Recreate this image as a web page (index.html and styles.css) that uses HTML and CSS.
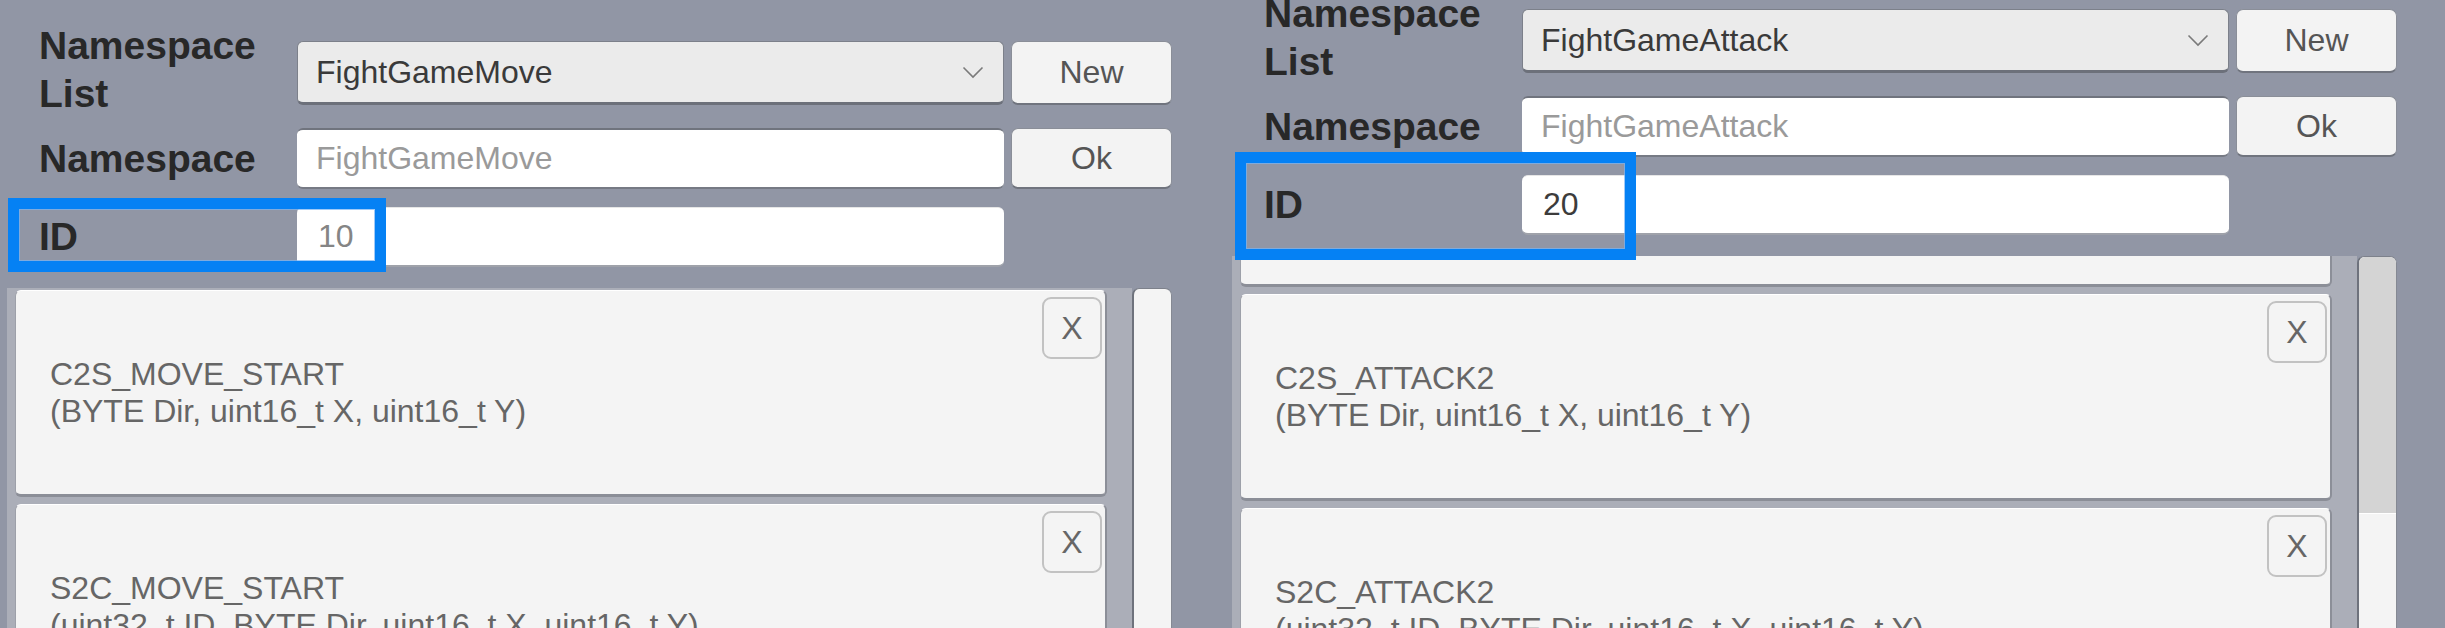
FILE: index.html
```html
<!DOCTYPE html>
<html lang="en">
<head>
<meta charset="utf-8">
<title>Packet Namespace Editor</title>
<link rel="stylesheet" href="styles.css">
</head>
<body>
<div class="page">
  <section class="panel panel-move">
    <div class="row row-list">
      <div class="label">Namespace<br>List</div>
      <div class="dropdown"><span>FightGameMove</span><svg class="chev" width="22" height="13" viewBox="0 0 22 13"><polyline points="1.5,1.5 11,11 20.5,1.5" fill="none" stroke="#7a7a7a" stroke-width="1.6"/></svg></div>
      <button class="btn">New</button>
    </div>
    <div class="row row-ns">
      <div class="label">Namespace</div>
      <div class="field ns-field">FightGameMove</div>
      <button class="btn btn-ok">Ok</button>
    </div>
    <div class="row row-id">
      <div class="label">ID</div>
      <div class="field id-field id-move">10</div>
    </div>
    <div class="scroll">
      <div class="list">
        <div class="cards">
          <div class="card">
            <div class="card-text">C2S_MOVE_START<br>(BYTE Dir, uint16_t X, uint16_t Y)</div>
            <button class="xbtn">X</button>
          </div>
          <div class="card">
            <div class="card-text">S2C_MOVE_START<br>(uint32_t ID, BYTE Dir, uint16_t X, uint16_t Y)</div>
            <button class="xbtn">X</button>
          </div>
        </div>
      </div>
      <div class="scrollbar"></div>
    </div>
    <div class="highlight hl-move"></div>
  </section>

  <section class="panel panel-attack">
    <div class="row row-list">
      <div class="label">Namespace<br>List</div>
      <div class="dropdown"><span>FightGameAttack</span><svg class="chev" width="22" height="13" viewBox="0 0 22 13"><polyline points="1.5,1.5 11,11 20.5,1.5" fill="none" stroke="#7a7a7a" stroke-width="1.6"/></svg></div>
      <button class="btn">New</button>
    </div>
    <div class="row row-ns">
      <div class="label">Namespace</div>
      <div class="field ns-field">FightGameAttack</div>
      <button class="btn btn-ok">Ok</button>
    </div>
    <div class="row row-id">
      <div class="label">ID</div>
      <div class="field id-field id-attack">20</div>
    </div>
    <div class="scroll">
      <div class="list">
        <div class="cards scrolled">
          <div class="card"></div>
          <div class="card">
            <div class="card-text">C2S_ATTACK2<br>(BYTE Dir, uint16_t X, uint16_t Y)</div>
            <button class="xbtn">X</button>
          </div>
          <div class="card">
            <div class="card-text">S2C_ATTACK2<br>(uint32_t ID, BYTE Dir, uint16_t X, uint16_t Y)</div>
            <button class="xbtn">X</button>
          </div>
        </div>
      </div>
      <div class="scrollbar"><div class="thumb"></div></div>
    </div>
    <div class="highlight hl-attack"></div>
  </section>
</div>
</body>
</html>
```
FILE: styles.css
```css
html, body {
  margin: 0;
  padding: 0;
}
body {
  width: 2445px;
  height: 628px;
  overflow: hidden;
  background: #9196a5;
  font-family: "Liberation Sans", Arial, sans-serif;
}
.page {
  display: flex;
  align-items: flex-start;
  width: 2445px;
  height: 628px;
  overflow: hidden;
}
.panel {
  position: relative;
  flex: none;
  width: 1225px;
  padding: 22px 0 0 7px;
  box-sizing: border-box;
}
.panel-attack {
  margin-top: -32px;
}
.row {
  display: flex;
  width: 1165px;
}
.label {
  flex: none;
  width: 290px;
  box-sizing: border-box;
  padding-left: 32px;
  font-size: 39px;
  line-height: 48px;
  font-weight: 700;
  color: #282828;
}
.row-list {
  align-items: flex-start;
}
.row-list .dropdown,
.row-list .btn {
  margin-top: 19px;
  height: 64px;
}
.row-ns {
  margin-top: 10px;
  align-items: center;
}
.row-ns .field,
.row-ns .btn {
  height: 61px;
}
.row-id {
  margin-top: 18px;
  align-items: center;
}
.row-id .field {
  height: 60px;
}
.dropdown {
  flex: none;
  width: 707px;
  box-sizing: border-box;
  display: flex;
  align-items: center;
  justify-content: space-between;
  padding: 0 19px 0 18px;
  background: #ebebeb;
  border: 1px solid #7c808a;
  border-bottom: 3px solid #6c707a;
  border-radius: 6px;
  font-size: 32px;
  color: #3a3a3a;
}
.chev {
  display: block;
}
.field {
  flex: none;
  width: 707px;
  box-sizing: border-box;
  display: flex;
  align-items: center;
  padding-left: 19px;
  background: #ffffff;
  border-radius: 6px;
  font-size: 32px;
}
.ns-field {
  border-top: 2px solid #70747e;
  border-bottom: 2px solid #767a84;
  color: #9a9a9a;
}
.id-field {
  border-top: 1px solid #e6e6e6;
  border-bottom: 2px solid #9fa2aa;
  padding-left: 21px;
}
.id-move {
  color: #858585;
}
.id-attack {
  color: #3c3c3c;
}
.btn {
  flex: none;
  width: 161px;
  margin-left: 7px;
  box-sizing: border-box;
  background: #f3f3f3;
  border: 1px solid #8a8e98;
  border-bottom: 2px solid #70747e;
  border-radius: 7px;
  font-family: "Liberation Sans", Arial, sans-serif;
  font-size: 32px;
  color: #555555;
  padding: 0;
}
.scroll {
  margin-top: 21px;
  display: flex;
  width: 1165px;
  height: 420px;
}
.list {
  flex: none;
  width: 1125px;
  box-sizing: border-box;
  padding: 2px 25px 0 8px;
  background: #abaeb8;
  overflow: hidden;
}
.cards.scrolled {
  margin-top: -178px;
}
.card {
  display: flex;
  height: 207px;
  box-sizing: border-box;
  margin-bottom: 7px;
  background: #f4f4f4;
  border-top: 1px solid #ffffff;
  border-left: 1px solid #9da0a9;
  border-right: 2px solid #8c8f98;
  border-bottom: 3px solid #8b8e97;
  border-radius: 6px;
}
.card-text {
  flex: 1;
  align-self: center;
  padding-left: 34px;
  font-size: 32px;
  line-height: 37px;
  color: #666666;
}
.xbtn {
  flex: none;
  align-self: flex-start;
  width: 60px;
  height: 62px;
  margin: 6px 3px 0 0;
  padding: 0;
  box-sizing: border-box;
  background: #f4f4f4;
  border: 2px solid #c2c2c2;
  border-radius: 9px;
  font-family: "Liberation Sans", Arial, sans-serif;
  font-size: 32px;
  color: #666666;
}
.scrollbar {
  flex: none;
  width: 40px;
  box-sizing: border-box;
  background: #f4f4f4;
  border-left: 2px solid #6e727c;
  border-right: 1px solid #858993;
  border-top: 1px solid #7d818b;
  border-radius: 7px 7px 0 0;
}
.thumb {
  height: 256px;
  background: #d4d4d4;
  border-bottom: 1px solid #ffffff;
  border-radius: 6px 6px 0 0;
}
.highlight {
  position: absolute;
  box-sizing: border-box;
  border: 11px solid #0581f4;
  box-shadow: inset 0 0 0 1px rgba(120, 180, 245, 0.7);
}
.hl-move {
  left: 8px;
  top: 198px;
  width: 378px;
  height: 74px;
}
.hl-attack {
  left: 10px;
  top: 184px;
  width: 401px;
  height: 108px;
}
```
